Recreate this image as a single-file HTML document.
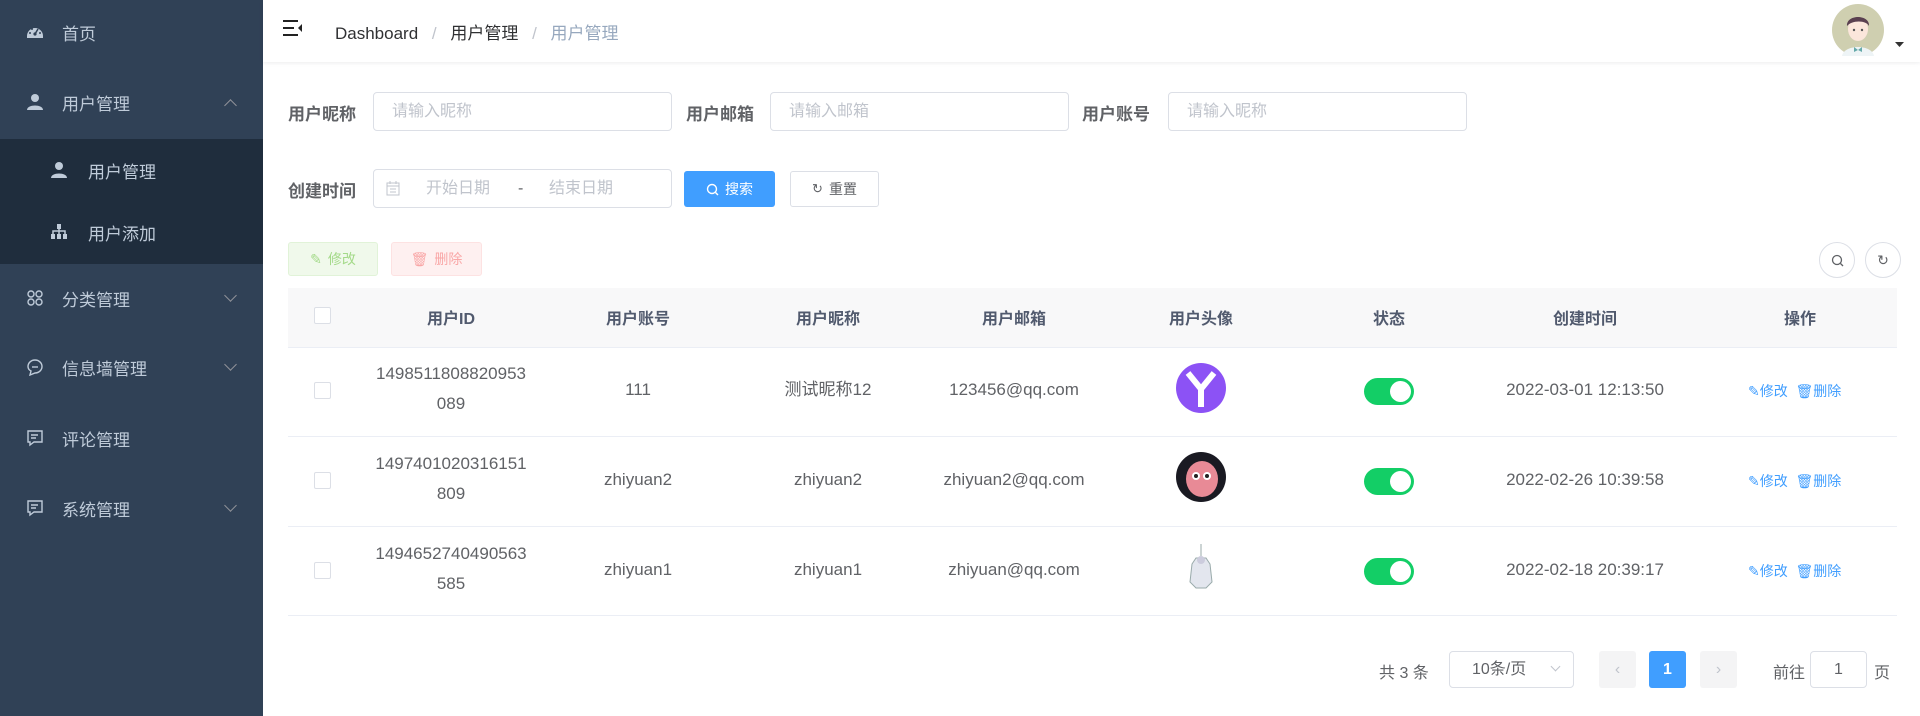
<!DOCTYPE html><html><head><meta charset="utf-8"><style>
*{box-sizing:border-box;margin:0;padding:0}
body{width:1920px;height:716px;overflow:hidden;font-family:"Liberation Sans","Noto Sans CJK SC",sans-serif;background:#fff;position:relative;color:#606266}
.a{position:absolute}
.side{left:0;top:0;width:263px;height:716px;background:#304156}
.mi{position:absolute;left:0;width:263px;height:70px;color:#bfcbd9;font-size:17px;display:flex;align-items:center}
.mi .ic{position:absolute;left:26px;width:18px;height:18px}
.mi span{position:absolute;left:62px}
.mi .ar{position:absolute;left:226px;width:9px;height:9px;border-right:1.3px solid #909399;border-bottom:1.3px solid #909399;transform:rotate(45deg)}
.sub{left:0;top:139px;width:263px;height:125px;background:#1f2d3d}
.lbl{font-size:17px;font-weight:bold;color:#606266}
.inp{border:1px solid #dcdfe6;border-radius:4px;height:39px;font-size:16px;color:#c0c4cc;padding-left:18px;line-height:37px;background:#fff}
.btn{border-radius:3px;font-size:14px;display:flex;align-items:center;justify-content:center}
.th{font-size:16px;font-weight:bold;color:#515a6e;text-align:center;transform:translateX(-50%)}
.td{font-size:17px;color:#606266;text-align:center;transform:translateX(-50%);line-height:30px;white-space:nowrap}
.cb{width:17px;height:17px;border:1px solid #dcdfe6;border-radius:2px;background:#fff}
.sw{width:50px;height:27px;border-radius:14px;background:#13ce66}
.sw:after{content:"";position:absolute;right:3px;top:3px;width:21px;height:21px;border-radius:50%;background:#fff}
.op{font-size:14px;color:#409eff}
.line{left:288px;width:1609px;height:1px;background:#ebeef5}
</style></head><body>
<div class="a side"></div>
<div class="a sub"></div>
<div class="mi" style="top:-3px"><svg class="ic" viewBox="0 0 18 18"><path d="M1 13A8 8 0 0 1 17 13L17 15H1Z" fill="#bfcbd9"/><circle cx="9" cy="11" r="1.6" fill="#304156"/><path d="M9 11L12 6" stroke="#304156" stroke-width="1.5"/><circle cx="4" cy="10" r="1" fill="#304156"/><circle cx="6" cy="6" r="1" fill="#304156"/><circle cx="14" cy="10" r="1" fill="#304156"/></svg><span>首页</span></div>
<div class="mi" style="top:67px"><svg class="ic" viewBox="0 0 18 18"><circle cx="9" cy="5" r="4" fill="#bfcbd9"/><path d="M1 17C1 11 17 11 17 17Z" fill="#bfcbd9"/></svg><span>用户管理</span><i class="ar" style="transform:rotate(225deg);top:34px"></i></div>
<div class="mi" style="top:135px"><svg class="ic" style="left:50px" viewBox="0 0 18 18"><circle cx="9" cy="5" r="4" fill="#bfcbd9"/><path d="M1 17C1 11 17 11 17 17Z" fill="#bfcbd9"/></svg><span style="left:88px">用户管理</span></div>
<div class="mi" style="top:197px"><svg class="ic" style="left:50px" viewBox="0 0 18 18"><rect x="7" y="1" width="4" height="5" fill="#bfcbd9"/><path d="M3 11V8H15V11M9 6V11" stroke="#bfcbd9" stroke-width="1.5" fill="none"/><rect x="1" y="11" width="4" height="5" fill="#bfcbd9"/><rect x="7" y="11" width="4" height="5" fill="#bfcbd9"/><rect x="13" y="11" width="4" height="5" fill="#bfcbd9"/></svg><span style="left:88px">用户添加</span></div>
<div class="mi" style="top:263px"><svg class="ic" viewBox="0 0 18 18" fill="none" stroke="#bfcbd9" stroke-width="1.4"><circle cx="5" cy="5" r="3"/><circle cx="13" cy="5" r="3"/><circle cx="5" cy="13" r="3"/><circle cx="13" cy="13" r="3"/></svg><span>分类管理</span><i class="ar" style="top:28px"></i></div>
<div class="mi" style="top:332px"><svg class="ic" viewBox="0 0 18 18" fill="none" stroke="#bfcbd9" stroke-width="1.4"><path d="M9 2C13 2 16 5 16 8.5S13 15 9 15L4 17L5 13C3 12 2 10 2 8.5 2 5 5 2 9 2Z"/><path d="M6 9H12"/></svg><span>信息墙管理</span><i class="ar" style="top:28px"></i></div>
<div class="mi" style="top:403px"><svg class="ic" viewBox="0 0 18 18" fill="none" stroke="#bfcbd9" stroke-width="1.4"><path d="M2 2H16V13H8L4 16V13H2Z"/><path d="M5 6H12M5 9H10"/></svg><span>评论管理</span></div>
<div class="mi" style="top:473px"><svg class="ic" viewBox="0 0 18 18" fill="none" stroke="#bfcbd9" stroke-width="1.4"><path d="M2 2H16V13H8L4 16V13H2Z"/><path d="M5 6H12M5 9H10"/></svg><span>系统管理</span><i class="ar" style="top:28px"></i></div>

<div class="a" style="left:263px;top:0;width:1657px;height:62px;box-shadow:0 1px 4px rgba(0,21,41,.08);background:#fff"></div>
<svg class="a" style="left:283px;top:19px" width="20" height="18" viewBox="0 0 20 18"><path d="M0 2H15M0 9H11M0 16H15" stroke="#222" stroke-width="2"/><path d="M19 5L15 9L19 13Z" fill="#222"/></svg>
<div class="a" style="left:335px;top:19px;font-size:17px;color:#303133">Dashboard <span style="color:#c0c4cc;margin:0 9px">/</span> 用户管理 <span style="color:#c0c4cc;margin:0 9px">/</span> <span style="color:#97a8be">用户管理</span></div>
<svg class="a" style="left:1832px;top:4px" width="52" height="52" viewBox="0 0 52 52"><circle cx="26" cy="26" r="26" fill="#cfcfb0"/><path d="M10 52C12 40 40 40 42 52Z" fill="#eef4f6"/><ellipse cx="26" cy="25" rx="10" ry="12" fill="#fbe6db"/><path d="M15 22C14 10 38 10 37 22C34 16 20 16 15 22Z" fill="#5a4050"/><circle cx="22" cy="26" r="1.2" fill="#555"/><circle cx="30" cy="26" r="1.2" fill="#555"/><path d="M22 43L26 46L30 43L30 48L26 46L22 48Z" fill="#6aa"/></svg>
<svg class="a" style="left:1895px;top:42px" width="9" height="6"><path d="M0 0H9L4.5 5Z" fill="#333"/></svg>

<div class="a lbl" style="left:288px;top:100px">用户昵称</div>
<div class="a inp" style="left:373px;top:92px;width:299px">请输入昵称</div>
<div class="a lbl" style="left:686px;top:100px">用户邮箱</div>
<div class="a inp" style="left:770px;top:92px;width:299px">请输入邮箱</div>
<div class="a lbl" style="left:1082px;top:100px">用户账号</div>
<div class="a inp" style="left:1168px;top:92px;width:299px">请输入昵称</div>
<div class="a lbl" style="left:288px;top:177px">创建时间</div>
<div class="a inp" style="left:373px;top:169px;width:299px;padding-left:0"><svg style="position:absolute;left:12px;top:11px" width="14" height="15" viewBox="0 0 14 15" fill="none" stroke="#c0c4cc"><rect x="1" y="2" width="12" height="12"/><path d="M1 5H13M4 0V3M10 0V3M4 8H10M4 11H10"/></svg><span style="position:absolute;left:52px">开始日期</span><span style="position:absolute;left:144px;color:#606266">-</span><span style="position:absolute;left:175px">结束日期</span></div>
<div class="a btn" style="left:684px;top:171px;width:91px;height:36px;background:#409eff;color:#fff"><svg width="13" height="13" viewBox="0 0 13 13" fill="none" stroke="#fff" stroke-width="1.4" style="margin-right:6px"><circle cx="6" cy="6" r="4.5"/><path d="M9.5 9.5L12 12"/></svg>搜索</div>
<div class="a btn" style="left:790px;top:171px;width:89px;height:36px;border:1px solid #dcdfe6;color:#606266"><span style="margin-right:6px;font-size:13px">↻</span>重置</div>
<div class="a btn" style="left:288px;top:242px;width:90px;height:34px;background:#f0f9eb;border:1px solid #e1f3d8;color:#a4da89"><span style="margin-right:6px">✎</span>修改</div>
<div class="a btn" style="left:391px;top:242px;width:91px;height:34px;background:#fef0f0;border:1px solid #fde2e2;color:#f9a7a7"><span style="margin-right:6px">🗑</span>删除</div>
<div class="a" style="left:1819px;top:242px;width:36px;height:36px;border:1px solid #dcdfe6;border-radius:50%"><svg style="position:absolute;left:11px;top:11px" width="13" height="13" viewBox="0 0 13 13" fill="none" stroke="#606266" stroke-width="1.3"><circle cx="6" cy="6" r="4.5"/><path d="M9.5 9.5L12 12"/></svg></div>
<div class="a" style="left:1865px;top:242px;width:36px;height:36px;border:1px solid #dcdfe6;border-radius:50%;text-align:center;line-height:34px;font-size:14px;color:#606266">↻</div>

<div class="a" style="left:288px;top:288px;width:1609px;height:59px;background:#f8f8f9"></div>
<div class="a line" style="top:347px"></div>
<div class="a line" style="top:436px"></div>
<div class="a line" style="top:526px"></div>
<div class="a line" style="top:615px"></div>
<div class="a cb" style="left:314px;top:307px"></div>
<div class="a th" style="left:451px;top:305px">用户ID</div>
<div class="a th" style="left:638px;top:305px">用户账号</div>
<div class="a th" style="left:828px;top:305px">用户昵称</div>
<div class="a th" style="left:1014px;top:305px">用户邮箱</div>
<div class="a th" style="left:1201px;top:305px">用户头像</div>
<div class="a th" style="left:1389px;top:305px">状态</div>
<div class="a th" style="left:1585px;top:305px">创建时间</div>
<div class="a th" style="left:1800px;top:305px">操作</div>

<div class="a cb" style="left:314px;top:382px"></div>
<div class="a td" style="left:451px;top:359px">1498511808820953<br>089</div>
<div class="a td" style="left:638px;top:375px">111</div>
<div class="a td" style="left:828px;top:375px">测试昵称12</div>
<div class="a td" style="left:1014px;top:375px">123456@qq.com</div>
<svg class="a" style="left:1176px;top:363px" width="50" height="50" viewBox="0 0 50 50"><circle cx="25" cy="25" r="25" fill="#8c52f5"/><path d="M12 10L25 26L38 10M25 26V44" stroke="#fff" stroke-width="6" fill="none"/></svg>
<div class="a sw" style="left:1364px;top:378px"></div>
<div class="a td" style="left:1585px;top:375px">2022-03-01 12:13:50</div>
<div class="a op" style="left:1748px;top:381px">✎修改 &nbsp;🗑删除</div>

<div class="a cb" style="left:314px;top:472px"></div>
<div class="a td" style="left:451px;top:449px">1497401020316151<br>809</div>
<div class="a td" style="left:638px;top:465px">zhiyuan2</div>
<div class="a td" style="left:828px;top:465px">zhiyuan2</div>
<div class="a td" style="left:1014px;top:465px">zhiyuan2@qq.com</div>
<svg class="a" style="left:1176px;top:452px" width="50" height="50" viewBox="0 0 50 50"><circle cx="25" cy="25" r="25" fill="#1a1a22"/><ellipse cx="26" cy="27" rx="16" ry="18" fill="#e88a96"/><circle cx="20" cy="24" r="4" fill="#fff"/><circle cx="31" cy="24" r="4" fill="#fff"/><circle cx="20" cy="24" r="2" fill="#222"/><circle cx="31" cy="24" r="2" fill="#222"/></svg>
<div class="a sw" style="left:1364px;top:468px"></div>
<div class="a td" style="left:1585px;top:465px">2022-02-26 10:39:58</div>
<div class="a op" style="left:1748px;top:471px">✎修改 &nbsp;🗑删除</div>

<div class="a cb" style="left:314px;top:562px"></div>
<div class="a td" style="left:451px;top:539px">1494652740490563<br>585</div>
<div class="a td" style="left:638px;top:555px">zhiyuan1</div>
<div class="a td" style="left:828px;top:555px">zhiyuan1</div>
<div class="a td" style="left:1014px;top:555px">zhiyuan@qq.com</div>
<svg class="a" style="left:1176px;top:542px" width="50" height="50" viewBox="0 0 50 50"><path d="M25 2V14M16 22L20 16H30L34 22L36 40L30 46H20L14 40Z" fill="#e3e6ee" stroke="#9aa" stroke-width="1"/><circle cx="25" cy="18" r="4" fill="#ccd"/></svg>
<div class="a sw" style="left:1364px;top:558px"></div>
<div class="a td" style="left:1585px;top:555px">2022-02-18 20:39:17</div>
<div class="a op" style="left:1748px;top:561px">✎修改 &nbsp;🗑删除</div>

<div class="a" style="left:1379px;top:659px;font-size:16px">共 3 条</div>
<div class="a" style="left:1449px;top:651px;width:125px;height:37px;border:1px solid #dcdfe6;border-radius:4px;font-size:16px;line-height:35px;padding-left:22px">10条/页<i style="position:absolute;right:14px;top:11px;width:7px;height:7px;border-right:1px solid #c0c4cc;border-bottom:1px solid #c0c4cc;transform:rotate(45deg)"></i></div>
<div class="a" style="left:1599px;top:651px;width:37px;height:37px;background:#f4f4f5;border-radius:3px;color:#c0c4cc;text-align:center;line-height:37px;font-size:16px">‹</div>
<div class="a" style="left:1649px;top:651px;width:37px;height:37px;background:#409eff;border-radius:3px;color:#fff;text-align:center;line-height:37px;font-size:16px;font-weight:bold">1</div>
<div class="a" style="left:1700px;top:651px;width:37px;height:37px;background:#f4f4f5;border-radius:3px;color:#c0c4cc;text-align:center;line-height:37px;font-size:16px">›</div>
<div class="a" style="left:1773px;top:659px;font-size:16px">前往</div>
<div class="a" style="left:1810px;top:651px;width:57px;height:37px;border:1px solid #dcdfe6;border-radius:4px;text-align:center;line-height:35px;font-size:16px">1</div>
<div class="a" style="left:1874px;top:659px;font-size:16px">页</div>
</body></html>
